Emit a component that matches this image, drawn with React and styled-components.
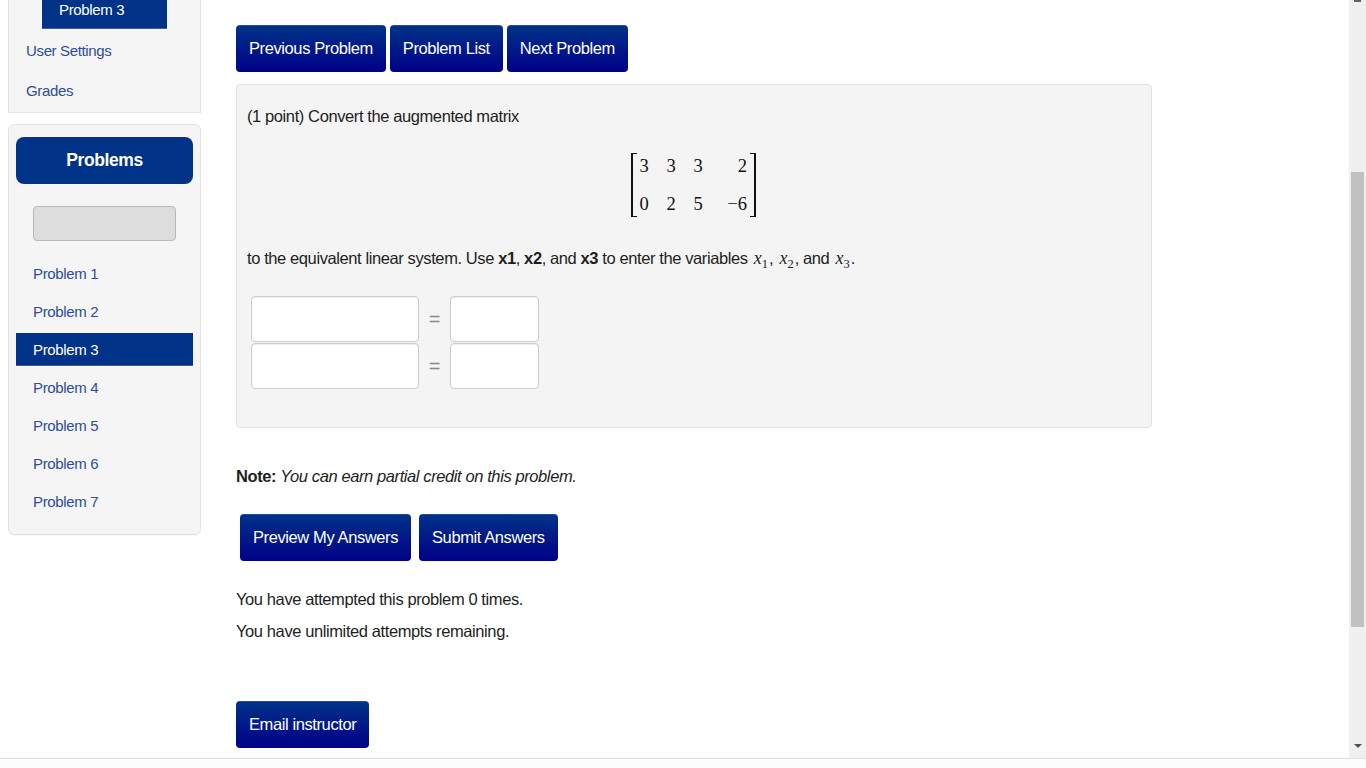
import React from "react";
import styled, { createGlobalStyle } from "styled-components";

const sans = `"Liberation Sans", Arial, sans-serif`;
const serif = `"Liberation Serif", "Times New Roman", serif`;
const link = "#2d4d9c";

const GlobalStyle = createGlobalStyle`
  html, body {
    margin: 0;
    padding: 0;
    background: #fff;
    overflow: hidden;
  }
  body {
    font-family: ${sans};
    color: #1e1e1e;
  }
  * { box-sizing: border-box; }
`;

const Screen = styled.div`
  width: 1366px;
  height: 768px;
  display: flex;
  flex-direction: column;
  overflow: hidden;
`;

const Viewport = styled.div`
  height: 758px;
  flex: none;
  display: flex;
`;

const Page = styled.div`
  flex: 1;
  display: flex;
  align-items: flex-start;
  padding-left: 8px;
  overflow: hidden;
`;

const BottomEdge = styled.div`
  flex: 1;
  border-top: 1px solid #e2e2e6;
  background: #fcfcfc;
`;

/* ---------- sidebar ---------- */

const Sidebar = styled.aside`
  width: 193px;
  flex: none;
  display: flex;
  flex-direction: column;
  gap: 11px;
  font-size: 15px;
  letter-spacing: -0.35px;
`;

const NavBox = styled.div`
  background: #f5f5f5;
  border: 1px solid #e3e3e3;
  border-top: none;
  padding-bottom: 1px;
`;

const SubItem = styled.div`
  margin: 0 0 2px 33px;
  width: 125px;
  height: 29px;
  padding-left: 17px;
  background: #038;
  border-bottom: 1px solid #3d5fa6;
  color: #fff;
  line-height: 20px;
`;

const NavLink = styled.a`
  display: block;
  padding-left: 17px;
  line-height: 40px;
  color: ${link};
  text-decoration: none;
`;

const ProblemsPanel = styled.div`
  background: #f5f5f5;
  border: 1px solid #e3e3e3;
  border-radius: 6px;
  padding: 12px 7px 16px;
  box-shadow: 0 1px 1px rgba(0, 0, 0, 0.04);
`;

const PanelHeader = styled.div`
  height: 47px;
  display: flex;
  align-items: center;
  justify-content: center;
  background: #038;
  border-radius: 8px;
  color: #fff;
  font-weight: bold;
  font-size: 17.5px;
  letter-spacing: -0.4px;
`;

const SearchBox = styled.div`
  width: 143px;
  height: 35px;
  margin: 22px auto 16px;
  background: #dddddd;
  border: 1px solid #b9b9b9;
  border-radius: 4px;
`;

const ProblemList = styled.div`
  display: flex;
  flex-direction: column;
  gap: 5px;
`;

const ProblemItem = styled.a`
  display: block;
  height: 33px;
  line-height: 33px;
  padding-left: 17px;
  text-decoration: none;
  color: ${(p) => (p.active ? "#fff" : link)};
  background: ${(p) => (p.active ? "#038" : "transparent")};
  ${(p) => p.active && "border-bottom: 1px solid #3d5fa6;"}
`;

/* ---------- main ---------- */

const Main = styled.main`
  width: 916px;
  flex: none;
  margin-left: 35px;
  padding-top: 25px;
  display: flex;
  flex-direction: column;
  align-items: flex-start;
  font-size: 16.5px;
  letter-spacing: -0.4px;
`;

const ButtonRow = styled.div`
  display: flex;
  gap: ${(p) => p.gap || 4}px;
  margin-top: ${(p) => p.top || 0}px;
  margin-left: ${(p) => p.indent || 0}px;
`;

const Button = styled.button`
  height: 47px;
  padding: 0 13px;
  border: none;
  border-radius: 4px;
  background: linear-gradient(to bottom, #038, #008);
  color: #fff;
  font-family: ${sans};
  font-size: 16.5px;
  letter-spacing: -0.4px;
  box-shadow: inset 0 1px 0 rgba(255, 255, 255, 0.12);
  cursor: pointer;
`;

const ProblemBox = styled.section`
  width: 916px;
  margin-top: 12px;
  padding: 19px 11px 38px 10px;
  background: #f4f4f4;
  border: 1px solid #e3e3e3;
  border-radius: 4px;
`;

const Line = styled.div`
  height: 24px;
  line-height: 24px;
  margin-top: ${(p) => p.top || 0}px;
`;

const MatrixWrap = styled.div`
  margin-top: 25px;
  display: flex;
  justify-content: center;
`;

const Matrix = styled.div`
  display: inline-flex;
  align-items: stretch;
  height: 64px;
  font-family: ${serif};
  font-size: 18.5px;
  letter-spacing: 0;
  color: #111;
`;

const Bracket = styled.span`
  width: 6px;
  border: 0 solid #111;
  border-top-width: 1.5px;
  border-bottom-width: 1.5px;
  ${(p) => (p.right ? "border-right-width: 2px;" : "border-left-width: 2px;")}
`;

const Cells = styled.div`
  display: grid;
  grid-template-columns: 14px 14px 14px 29px;
  grid-template-rows: 26px 26px;
  column-gap: 13px;
  row-gap: 12px;
  align-content: center;
  padding-right: 3px;
`;

const Cell = styled.span`
  text-align: ${(p) => (p.last ? "right" : "center")};
  line-height: 26px;
`;

const Bold = styled.b`
  font-weight: bold;
`;

const MathVar = styled.span`
  font-family: ${serif};
  font-style: italic;
  font-size: 18px;
  letter-spacing: 0;
  line-height: 0;
  margin-left: 2px;
`;

const MathSub = styled.sub`
  font-family: ${serif};
  font-size: 12.5px;
  letter-spacing: 0;
  line-height: 0;
  vertical-align: -4px;
  margin-right: 1px;
`;

const AnswerGrid = styled.div`
  margin-top: 26px;
  margin-left: 4px;
  display: grid;
  grid-template-columns: 168px 12px 89px;
  grid-auto-rows: 46px;
  column-gap: 9.5px;
  row-gap: 1px;
  align-items: center;
`;

const Input = styled.input`
  width: 100%;
  height: 46px;
  border: 1px solid #cccccc;
  border-radius: 4px;
  background: #fff;
  box-shadow: inset 0 1px 1px rgba(0, 0, 0, 0.075);
  font-size: 16px;
`;

const Equals = styled.span`
  text-align: center;
  color: #8a8a8a;
  font-family: ${sans};
  font-size: 20px;
  letter-spacing: 0;
`;

const Note = styled.div`
  margin-top: 36px;
  line-height: 24px;
`;

const Italic = styled.i`
  font-style: italic;
`;

const Status = styled.div`
  margin-top: 22px;
  line-height: 32px;
`;

/* ---------- fake scrollbar ---------- */

const Scrollbar = styled.div`
  width: 17px;
  flex: none;
  background: #f0f0f0;
  display: flex;
  flex-direction: column;
  align-items: center;
`;

const UpArrow = styled.span`
  width: 7px;
  height: 2px;
  background: #606060;
`;

const Thumb = styled.div`
  width: 13px;
  height: 455px;
  margin-top: 170px;
  background: #c1c1c1;
`;

const DownArrow = styled.span`
  margin-top: auto;
  margin-bottom: 10px;
  width: 0;
  height: 0;
  border-left: 4px solid transparent;
  border-right: 4px solid transparent;
  border-top: 4px solid #505050;
`;

const matrix = [
  ["3", "3", "3", "2"],
  ["0", "2", "5", "\u22126"],
];

const problems = [1, 2, 3, 4, 5, 6, 7];

export default function App() {
  return (
    <Screen>
      <GlobalStyle />
      <Viewport>
        <Page>
          <Sidebar>
            <NavBox>
              <SubItem>Problem 3</SubItem>
              <NavLink href="#">User Settings</NavLink>
              <NavLink href="#">Grades</NavLink>
            </NavBox>
            <ProblemsPanel>
              <PanelHeader>Problems</PanelHeader>
              <SearchBox />
              <ProblemList>
                {problems.map((n) => (
                  <ProblemItem key={n} href="#" active={n === 3}>
                    Problem {n}
                  </ProblemItem>
                ))}
              </ProblemList>
            </ProblemsPanel>
          </Sidebar>

          <Main>
            <ButtonRow>
              <Button>Previous Problem</Button>
              <Button>Problem List</Button>
              <Button>Next Problem</Button>
            </ButtonRow>

            <ProblemBox>
              <Line>(1 point) Convert the augmented matrix</Line>
              <MatrixWrap>
                <Matrix>
                  <Bracket />
                  <Cells>
                    {matrix.map((row, r) =>
                      row.map((v, c) => (
                        <Cell key={`${r}-${c}`} last={c === 3}>
                          {v}
                        </Cell>
                      ))
                    )}
                  </Cells>
                  <Bracket right />
                </Matrix>
              </MatrixWrap>
              <Line top={29}>
                to the equivalent linear system. Use <Bold>x1</Bold>, <Bold>x2</Bold>, and{" "}
                <Bold>x3</Bold> to enter the variables <MathVar>x</MathVar>
                <MathSub>1</MathSub>, <MathVar>x</MathVar>
                <MathSub>2</MathSub>, and <MathVar>x</MathVar>
                <MathSub>3</MathSub>.
              </Line>
              <AnswerGrid>
                <Input />
                <Equals>=</Equals>
                <Input />
                <Input />
                <Equals>=</Equals>
                <Input />
              </AnswerGrid>
            </ProblemBox>

            <Note>
              <Bold>Note:</Bold> <Italic>You can earn partial credit on this problem.</Italic>
            </Note>

            <ButtonRow top={26} indent={4} gap={8}>
              <Button>Preview My Answers</Button>
              <Button>Submit Answers</Button>
            </ButtonRow>

            <Status>
              <div>You have attempted this problem 0 times.</div>
              <div>You have unlimited attempts remaining.</div>
            </Status>

            <ButtonRow top={54}>
              <Button>Email instructor</Button>
            </ButtonRow>
          </Main>
        </Page>
        <Scrollbar>
          <UpArrow />
          <Thumb />
          <DownArrow />
        </Scrollbar>
      </Viewport>
      <BottomEdge />
    </Screen>
  );
}
